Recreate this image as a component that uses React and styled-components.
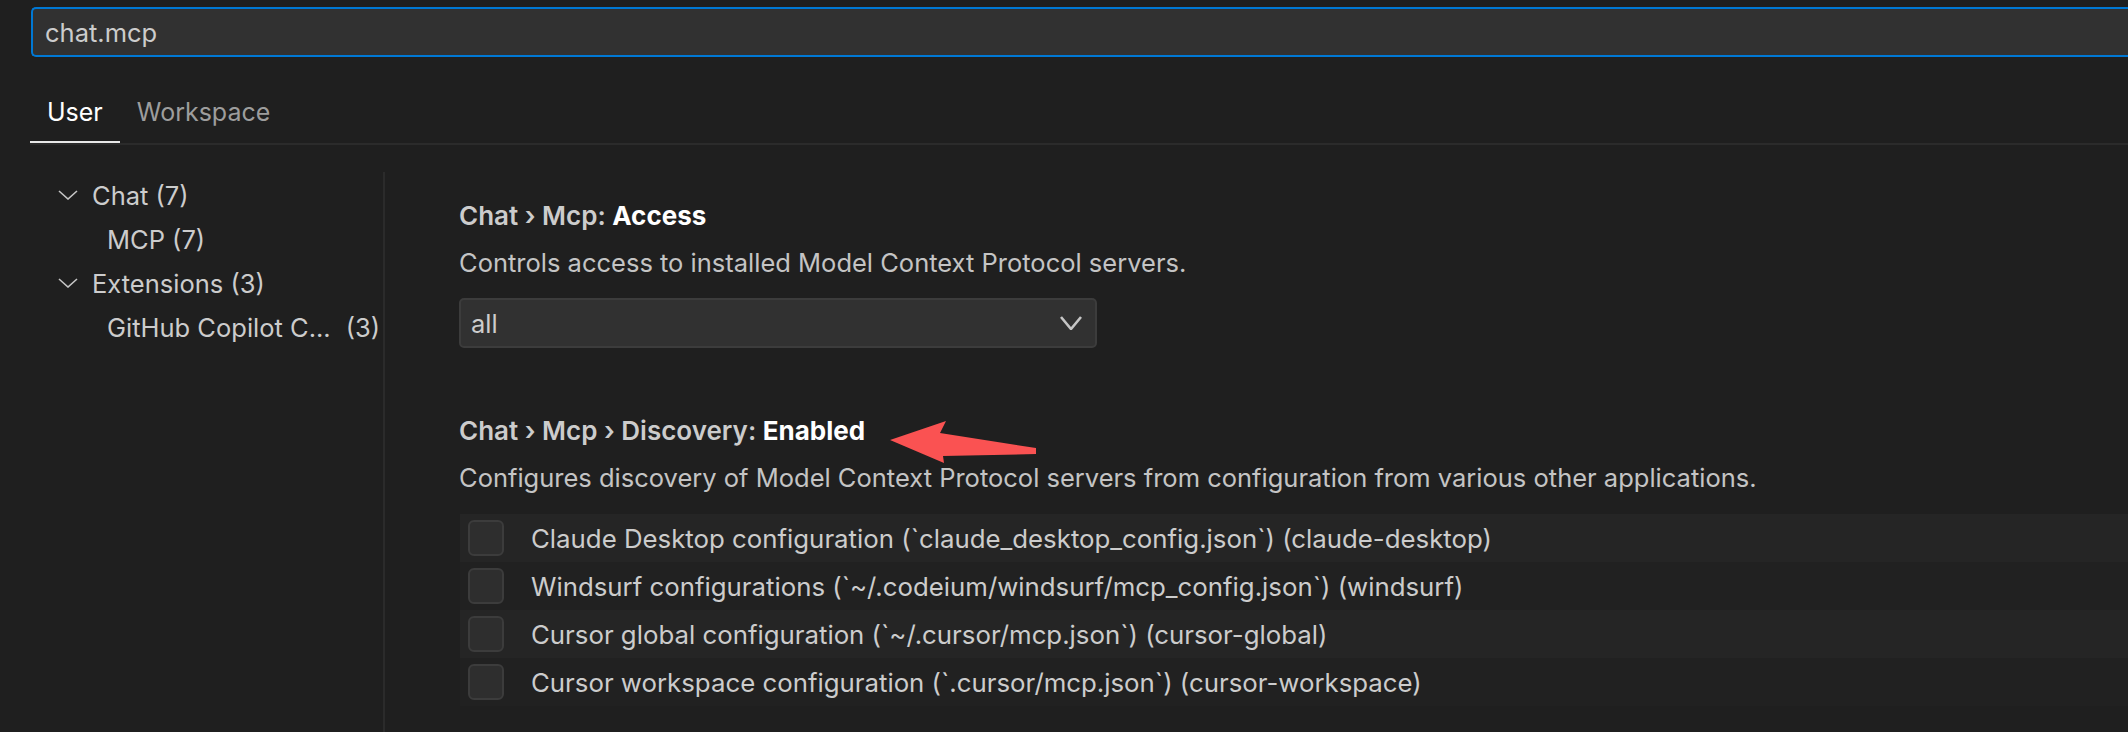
import React from "react";
import styled, { createGlobalStyle } from "styled-components";

const GlobalStyle = createGlobalStyle`
  html, body {
    margin: 0;
    padding: 0;
    background: #1f1f1f;
  }
  body {
    font-family: Inter, "Noto Sans", "Liberation Sans", sans-serif;
    color: #cccccc;
  }
`;

const Page = styled.div`
  position: relative;
  width: 2128px;
  height: 732px;
  overflow: hidden;
  background: #1f1f1f;
`;

const SearchWrap = styled.div`
  padding: 7px 0 0 31px;
`;

const SearchInput = styled.div`
  box-sizing: border-box;
  height: 50px;
  display: flex;
  align-items: center;
  padding-left: 12px;
  background: #313131;
  border: 2px solid #0078d4;
  border-right: none;
  border-radius: 5px 0 0 5px;
  font-size: 25.5px;
  color: #cccccc;
`;

const TabBar = styled.div`
  display: flex;
  margin: 23px 0 0 30px;
  border-bottom: 2px solid #2b2b2b;
`;

const Tab = styled.div`
  height: 63px;
  display: flex;
  align-items: center;
  padding: 0 17px;
  font-size: 25px;
  color: ${(p) => (p.$active ? "#ffffff" : "#9d9d9d")};
  box-shadow: ${(p) => (p.$active ? "inset 0 -2px 0 #e8e8e8" : "none")};
  margin-bottom: -2px;
  border-bottom: 2px solid transparent;
`;

const Body = styled.div`
  display: flex;
  margin-top: 27px;
  height: 600px;
`;

const Tree = styled.div`
  width: 383px;
  flex-shrink: 0;
  border-right: 2px solid #2b2b2b;
  padding-top: 1px;
`;

const TreeRow = styled.div`
  height: 44px;
  display: flex;
  align-items: center;
  padding-left: ${(p) => p.$indent}px;
  padding-right: 3px;
  font-size: 25.5px;
  color: #cccccc;
  white-space: nowrap;
`;

const Chevron = styled.svg`
  width: 20px;
  height: 10px;
  margin-right: 14px;
  flex-shrink: 0;
`;

const TreeCount = styled.span`
  margin-left: auto;
`;

const Content = styled.div`
  flex: 1;
  padding: 26px 0 0 74px;
`;

const Setting = styled.div`
  margin-bottom: ${(p) => p.$gap || 0}px;
`;

const Title = styled.div`
  font-size: 26px;
  line-height: 36px;
  font-weight: 600;
  color: #cccccc;
  white-space: nowrap;
  b {
    color: #ffffff;
    font-weight: 700;
  }
`;

const Description = styled.div`
  margin-top: 11px;
  font-size: 25.5px;
  line-height: 36px;
  color: #c4c4c4;
  white-space: nowrap;
`;

const Select = styled.div`
  box-sizing: border-box;
  margin-top: 17px;
  width: 638px;
  height: 50px;
  display: flex;
  align-items: center;
  justify-content: space-between;
  padding: 0 13px 0 10px;
  background: #313131;
  border: 2px solid #3c3c3c;
  border-radius: 5px;
  font-size: 25.5px;
  color: #cccccc;
`;

const SelectChevron = styled.svg`
  width: 22px;
  height: 14px;
`;

const List = styled.div`
  margin-top: 18px;
  margin-left: 1px;
`;

const ListRow = styled.div`
  height: 48px;
  display: flex;
  align-items: center;
  padding-left: 8px;
  background: ${(p) => (p.$odd ? "#252525" : "#212121")};
  font-size: 25.8px;
  color: #cccccc;
  white-space: nowrap;
`;

const Checkbox = styled.div`
  box-sizing: border-box;
  width: 36px;
  height: 36px;
  border: 2px solid #3c3c3c;
  background: #2e2e2e;
  border-radius: 6px;
  margin-right: 27px;
  flex-shrink: 0;
`;

const Arrow = styled.svg`
  position: absolute;
  left: 876px;
  top: 410px;
  width: 170px;
  height: 60px;
`;

const ChevronDown = ({ as: Comp = Chevron, w = 20, h = 10, sw = 1.6 }) => (
  <Comp viewBox={`0 0 ${w} ${h}`}>
    <polyline
      points={`1,1 ${w / 2},${h - 1} ${w - 1},1`}
      fill="none"
      stroke="#c5c5c5"
      strokeWidth={sw}
      strokeLinejoin="miter"
    />
  </Comp>
);

const options = [
  "Claude Desktop configuration (`claude_desktop_config.json`) (claude-desktop)",
  "Windsurf configurations (`~/.codeium/windsurf/mcp_config.json`) (windsurf)",
  "Cursor global configuration (`~/.cursor/mcp.json`) (cursor-global)",
  "Cursor workspace configuration (`.cursor/mcp.json`) (cursor-workspace)",
];

export default function App() {
  return (
    <>
      <GlobalStyle />
      <Page>
        <SearchWrap>
          <SearchInput>chat.mcp</SearchInput>
        </SearchWrap>
        <TabBar>
          <Tab $active>User</Tab>
          <Tab>Workspace</Tab>
        </TabBar>
        <Body>
          <Tree>
            <TreeRow $indent={58}>
              <ChevronDown />
              Chat (7)
            </TreeRow>
            <TreeRow $indent={107}>MCP (7)</TreeRow>
            <TreeRow $indent={58}>
              <ChevronDown />
              Extensions (3)
            </TreeRow>
            <TreeRow $indent={107}>
              GitHub Copilot C...
              <TreeCount>(3)</TreeCount>
            </TreeRow>
          </Tree>
          <Content>
            <Setting $gap={65}>
              <Title>
                Chat › Mcp: <b>Access</b>
              </Title>
              <Description>
                Controls access to installed Model Context Protocol servers.
              </Description>
              <Select>
                all
                <ChevronDown as={SelectChevron} w={22} h={14} sw={2.6} />
              </Select>
            </Setting>
            <Setting>
              <Title>
                Chat › Mcp › Discovery: <b>Enabled</b>
              </Title>
              <Description>
                Configures discovery of Model Context Protocol servers from
                configuration from various other applications.
              </Description>
              <List>
                {options.map((o, i) => (
                  <ListRow key={o} $odd={i % 2 === 0}>
                    <Checkbox />
                    {o}
                  </ListRow>
                ))}
              </List>
            </Setting>
          </Content>
        </Body>
        <Arrow viewBox="0 0 170 60">
          <polygon
            points="14,30 70,11 64,23 160,38 160,44 67,46 68,53"
            fill="#fa5252"
          />
        </Arrow>
      </Page>
    </>
  );
}
